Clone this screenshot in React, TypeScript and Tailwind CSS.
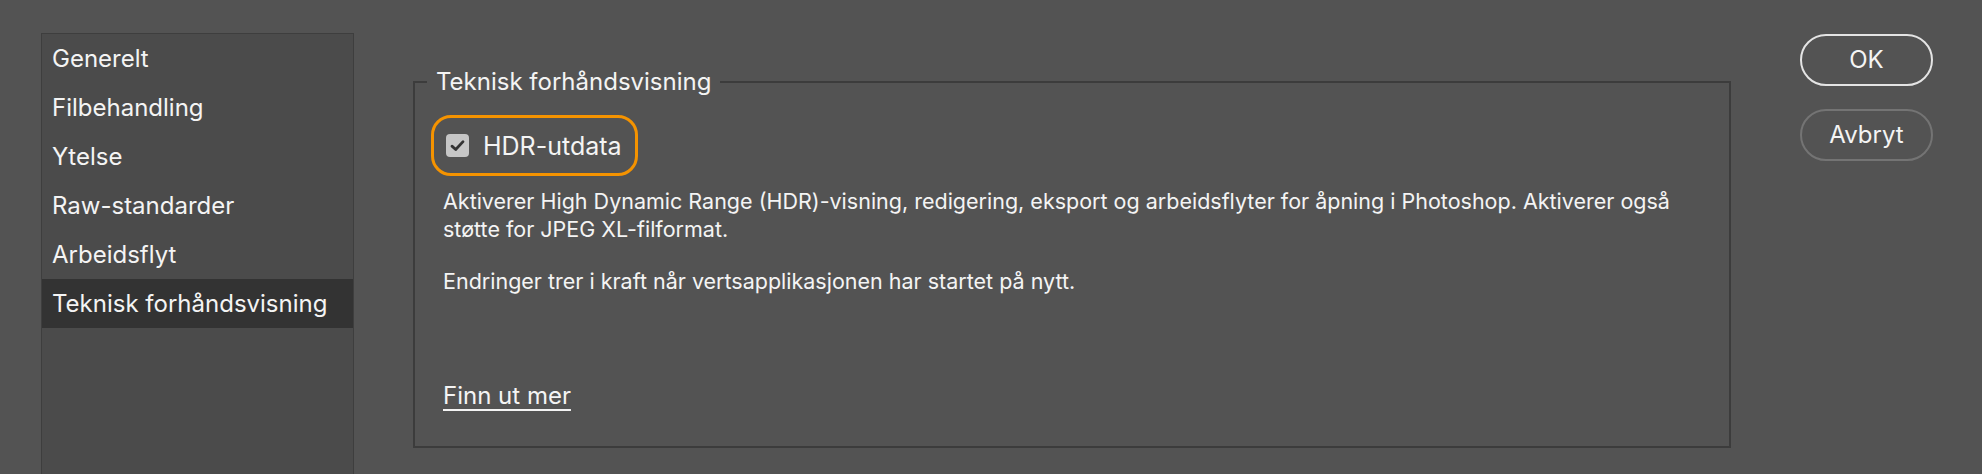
import React from "react";

const items = [
  "Generelt",
  "Filbehandling",
  "Ytelse",
  "Raw-standarder",
  "Arbeidsflyt",
  "Teknisk forhåndsvisning",
];

export default function App() {
  return (
    <div
      className="w-[1982px] h-[474px] bg-[#535353] flex items-start overflow-hidden text-[#f4f4f4]"
      style={{ fontFamily: "Inter, 'Noto Sans', sans-serif" }}
    >
      {/* Sidebar */}
      <div className="ml-[41px] mt-[33px] w-[313px] h-[441px] border border-b-0 border-[#3e3e3e] bg-[#4b4b4b] flex flex-col">
        {items.map((it, i) => (
          <div
            key={it}
            className={
              "h-[49px] flex items-center pl-[10px] text-[24px] " +
              (i === 5 ? "bg-[#333333]" : "")
            }
          >
            {it}
          </div>
        ))}
      </div>

      {/* Main panel */}
      <fieldset className="ml-[59px] mt-[67px] w-[1318px] h-[381px] border-2 border-[#3c3c3c] pl-[12px] pr-[12px] pt-[18px]">
        <legend className="px-[9px] text-[24px] leading-[30px]">
          Teknisk forhåndsvisning
        </legend>
        <label className="ml-[4px] w-[207px] h-[61px] border-[3px] border-[#f59300] rounded-[20px] flex items-center pl-[12px] gap-[14px]">
          <span className="w-[23px] h-[23px] rounded-[4px] bg-[#c6c6c6] flex items-center justify-center">
            <svg width="17" height="17" viewBox="0 0 16 16" fill="none">
              <path
                d="M2.8 8.6 L6.3 11.8 L13.2 4.4"
                stroke="#333333"
                strokeWidth="2.6"
                strokeLinecap="round"
                strokeLinejoin="round"
              />
            </svg>
          </span>
          <span className="text-[25px] leading-[30px]">HDR-utdata</span>
        </label>
        <div className="ml-[16px] mt-[11px] text-[21.5px] leading-[28px]">
          <p>
            Aktiverer High Dynamic Range (HDR)-visning, redigering, eksport og
            arbeidsflyter for åpning i Photoshop. Aktiverer også
            <br />
            støtte for JPEG XL-filformat.
          </p>
          <p className="mt-[24px]">
            Endringer trer i kraft når vertsapplikasjonen har startet på nytt.
          </p>
        </div>
        <a
          href="#"
          className="block w-max ml-[16px] mt-[86px] text-[24px] leading-[30px] underline underline-offset-[5px] decoration-2"
        >
          Finn ut mer
        </a>
      </fieldset>

      {/* Buttons */}
      <div className="ml-[69px] mt-[34px] flex flex-col gap-[23px]">
        <button className="w-[133px] h-[52px] rounded-full border-2 border-[#e4e4e4] text-[24px] text-[#f4f4f4]">
          OK
        </button>
        <button className="w-[133px] h-[52px] rounded-full border-2 border-[#747474] text-[24px] text-[#f4f4f4]">
          Avbryt
        </button>
      </div>
    </div>
  );
}
